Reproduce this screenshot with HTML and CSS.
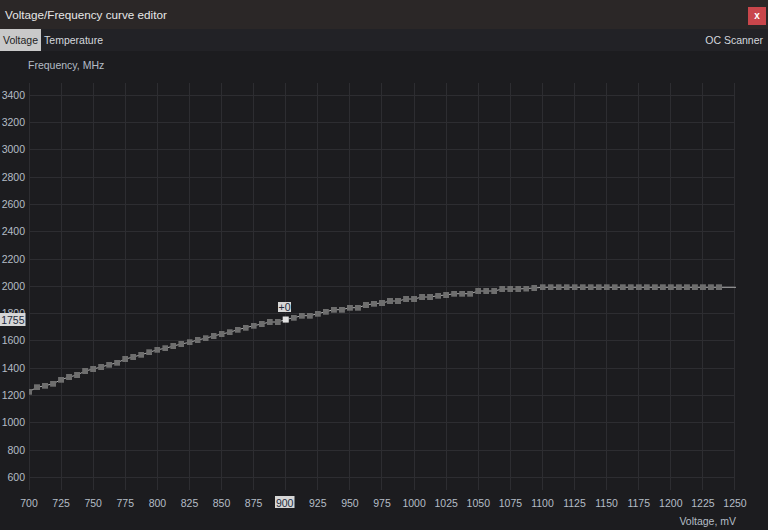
FILE: index.html
```html
<!DOCTYPE html>
<html>
<head>
<meta charset="utf-8">
<title>Voltage/Frequency curve editor</title>
<link rel="stylesheet" href="styles.css">
</head>
<body>
<div class="window">
  <header class="titlebar">
    <span class="title">Voltage/Frequency curve editor</span>
    <button class="close">x</button>
  </header>
  <nav class="tabs">
    <span class="tab active">Voltage</span>
    <span class="tab">Temperature</span>
    <span class="spacer"></span>
    <span class="tab scanner">OC Scanner</span>
  </nav>
  <main class="editor">
    <div class="axis-title freq">Frequency, MHz</div>
    <svg class="chart" width="768" height="438" viewBox="0 74 768 438">
      <defs>
        <clipPath id="plot"><rect x="29" y="83" width="707" height="407"/></clipPath>
        <marker id="pt" markerWidth="6" markerHeight="6" refX="3" refY="3" markerUnits="userSpaceOnUse">
          <rect class="pt" width="6" height="6"/>
        </marker>
      </defs>
      <path class="grid" d="M29.5 83V490M61.5 83V490M93.5 83V490M125.5 83V490M157.5 83V490M189.5 83V490M221.5 83V490M253.5 83V490M285.5 83V490M317.5 83V490M349.5 83V490M381.5 83V490M414.5 83V490M446.5 83V490M478.5 83V490M510.5 83V490M542.5 83V490M574.5 83V490M606.5 83V490M638.5 83V490M670.5 83V490M702.5 83V490M734.5 83V490M29 477.5H735M29 450.5H735M29 422.5H735M29 395.5H735M29 368.5H735M29 340.5H735M29 313.5H735M29 286.5H735M29 259.5H735M29 231.5H735M29 204.5H735M29 177.5H735M29 149.5H735M29 122.5H735M29 95.5H735"/>
      <g class="ylabels">
        <text x="25" y="481">600</text>
        <text x="25" y="454">800</text>
        <text x="25" y="426">1000</text>
        <text x="25" y="399">1200</text>
        <text x="25" y="372">1400</text>
        <text x="25" y="344">1600</text>
        <text x="25" y="317">1800</text>
        <text x="25" y="290">2000</text>
        <text x="25" y="263">2200</text>
        <text x="25" y="235">2400</text>
        <text x="25" y="208">2600</text>
        <text x="25" y="181">2800</text>
        <text x="25" y="153">3000</text>
        <text x="25" y="126">3200</text>
        <text x="25" y="99">3400</text>
      </g>
      <g class="xlabels">
        <text x="29" y="506.5">700</text>
        <text x="61.1" y="506.5">725</text>
        <text x="93.2" y="506.5">750</text>
        <text x="125.3" y="506.5">775</text>
        <text x="157.4" y="506.5">800</text>
        <text x="189.5" y="506.5">825</text>
        <text x="221.5" y="506.5">850</text>
        <text x="253.6" y="506.5">875</text>
        <text x="317.8" y="506.5">925</text>
        <text x="349.9" y="506.5">950</text>
        <text x="382" y="506.5">975</text>
        <text x="414.1" y="506.5">1000</text>
        <text x="446.2" y="506.5">1025</text>
        <text x="478.3" y="506.5">1050</text>
        <text x="510.4" y="506.5">1075</text>
        <text x="542.5" y="506.5">1100</text>
        <text x="574.5" y="506.5">1125</text>
        <text x="606.6" y="506.5">1150</text>
        <text x="638.7" y="506.5">1175</text>
        <text x="670.8" y="506.5">1200</text>
        <text x="702.9" y="506.5">1225</text>
        <text x="735" y="506.5">1250</text>
      </g>
      <g clip-path="url(#plot)">
        <line class="curve" x1="719" y1="287.3" x2="736" y2="287.3"/>
        <polyline class="curve points" points="29,391.7 37,387.3 45,385.7 53.1,383.7 61.1,379.7 69.1,377 77.1,375 85.2,371 93.2,369 101.2,367 109.2,364.7 117.2,362.7 125.3,359 133.3,357 141.3,354.7 149.3,352.3 157.4,349.7 165.4,348.3 173.4,346 181.4,344 189.5,342.3 197.5,340 205.5,338.3 213.5,336 221.5,334 229.6,332.3 237.6,329.7 245.6,327.7 253.6,325.7 261.7,324 269.7,322 277.7,322 285.7,319.5 293.7,317.7 301.8,315.7 309.8,315.7 317.8,313.7 325.8,311.7 333.9,309.7 341.9,309.7 349.9,307.7 357.9,307.7 366,305 374,303.7 382,303 390,301 398,301 406.1,299 414.1,299 422.1,297 430.1,297 438.2,295.7 446.2,295 454.2,293.7 462.2,293.7 470.2,293.7 478.3,291 486.3,291 494.3,291 502.3,289 510.4,289 518.4,289 526.4,288.5 534.4,288 542.5,287.3 550.5,287.3 558.5,287.3 566.5,287.3 574.5,287.3 582.6,287.3 590.6,287.3 598.6,287.3 606.6,287.3 614.6,287.3 622.7,287.3 630.7,287.3 638.7,287.3 646.7,287.3 654.8,287.3 662.8,287.3 670.8,287.3 678.8,287.3 686.9,287.3 694.9,287.3 702.9,287.3 710.9,287.3 719,287.3"/>
        <rect class="sel" x="282.7" y="316.5" width="6" height="6"/>
      </g>
      <rect class="tag" x="0" y="313" width="25.5" height="13"/>
      <text class="tagtext" x="24.5" y="323.5">1755</text>
      <rect class="tag" x="278" y="302" width="13" height="10"/>
      <text class="tagtext mid" x="284.6" y="310.6">+0</text>
      <rect class="tag" x="275" y="496" width="19.5" height="12"/>
      <text class="tagtext mid" x="284.7" y="506.5">900</text>
    </svg>
    <div class="axis-title volt">Voltage, mV</div>
  </main>
</div>
</body>
</html>
```
FILE: styles.css
```css
html, body {
  margin: 0;
  padding: 0;
  background: #1c1c1f;
}
.window {
  width: 768px;
  height: 530px;
  display: flex;
  flex-direction: column;
  font-family: "Liberation Sans", Arial, sans-serif;
  overflow: hidden;
}
.titlebar {
  height: 29px;
  background: #2b2727;
  display: flex;
  align-items: flex-start;
  padding: 0 2px 0 5px;
  box-sizing: border-box;
}
.title {
  font-size: 11.7px;
  line-height: 29px;
  color: #e6e6e6;
  flex: 1;
}
.close {
  margin-top: 7px;
  width: 18px;
  height: 18px;
  border: none;
  padding: 0;
  background: #c9464b;
  color: #ffffff;
  font-family: "Liberation Sans", Arial, sans-serif;
  font-weight: bold;
  font-size: 10px;
  line-height: 16px;
}
.tabs {
  height: 22px;
  background: #222226;
  display: flex;
  align-items: stretch;
  padding-right: 5px;
}
.tab {
  font-size: 10.5px;
  line-height: 22px;
  color: #d4d8de;
  padding: 0 3px;
}
.tab.active {
  background: #c9c9c9;
  color: #222222;
}
.spacer { flex: 1; }
.tab.scanner { padding: 0; }
.editor {
  flex: 1;
  display: flex;
  flex-direction: column;
}
.axis-title {
  font-size: 10.5px;
  color: #b4bcc6;
}
.axis-title.freq {
  height: 23px;
  box-sizing: border-box;
  padding: 8px 0 0 28px;
  line-height: 12px;
}
.chart {
  display: block;
}
.axis-title.volt {
  height: 18px;
  line-height: 18px;
  text-align: right;
  padding-right: 32px;
}
.grid {
  fill: none;
  stroke: #2d2d31;
  stroke-width: 1;
}
.ylabels text {
  font-size: 10.5px;
  fill: #b4bcc6;
  text-anchor: end;
}
.xlabels text {
  font-size: 10.5px;
  fill: #b4bcc6;
  text-anchor: middle;
}
.curve {
  fill: none;
  stroke: #a9a9a9;
  stroke-width: 1;
}
.points {
  marker-start: url(#pt);
  marker-mid: url(#pt);
  marker-end: url(#pt);
}
.pt { fill: #6e6e6e; }
.sel { fill: #e2e2e2; }
.tag { fill: #d6d6d6; }
.tagtext {
  font-size: 10.5px;
  fill: #1d2a3c;
  text-anchor: end;
}
.tagtext.mid { text-anchor: middle; }
```
